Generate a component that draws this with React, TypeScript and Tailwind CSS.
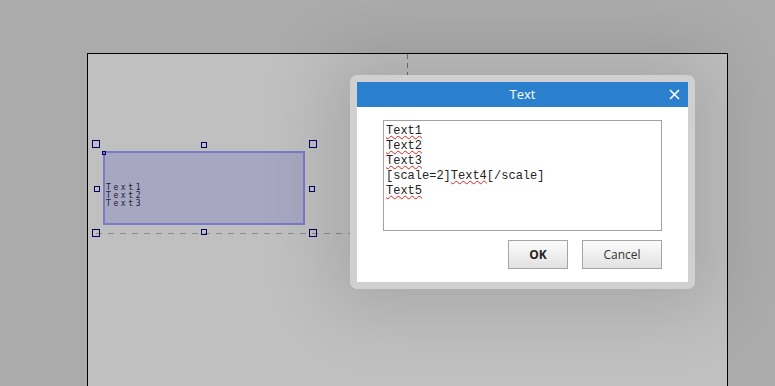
import React from 'react'

const lines = [
  { pre: '', word: 'Text1', post: '' },
  { pre: '', word: 'Text2', post: '' },
  { pre: '', word: 'Text3', post: '' },
  { pre: '[scale=2]', word: 'Text4', post: '[/scale]' },
  { pre: '', word: 'Text5', post: '' },
]

// selection handles on the canvas: [x, y, big]
const handles: [number, number, boolean][] = [
  [4, 86, true],
  [113, 88, false],
  [221, 86, true],
  [6, 132, false],
  [221, 132, false],
  [4, 175, true],
  [113, 175, false],
  [221, 175, true],
]

function Canvas() {
  return (
    <div className="relative w-[641px] h-[340px] border border-black border-b-0 bg-[#c0c0c0]">
      <div className="absolute left-[319px] top-0 w-px h-[24px] bg-[repeating-linear-gradient(180deg,#6f6f6f_0_5px,transparent_5px_9px)]" />
      <div className="absolute left-[15px] top-[97px] w-[202px] h-[74px] border-2 border-[#7a7acb] bg-[#a7a7c1]">
        <div className="pt-[31px] pl-[1px] font-['DejaVu_Sans_Mono',monospace] text-[8px] leading-[8px] tracking-[2.6px] text-[#1a1a2a]">
          <div>Text1</div>
          <div>Text2</div>
          <div>Text3</div>
        </div>
      </div>
      <div className="absolute left-[14px] top-[97px] w-[4px] h-[4px] border border-[#000066]" />
      <div className="absolute left-[8px] top-[179px] w-[260px] h-px bg-[repeating-linear-gradient(90deg,#8a8a8a_0_6px,transparent_6px_12px)]" />
      {handles.map(([x, y, big], i) => (
        <div
          key={i}
          className={`absolute border border-[#000066] ${big ? 'w-[8px] h-[8px]' : 'w-[6px] h-[6px]'}`}
          style={{ left: x, top: y }}
        />
      ))}
    </div>
  )
}

function Dialog() {
  return (
    <div className="absolute left-[350px] top-[75px] w-[345px] h-[214px] rounded-[7px] bg-[#d0d0d0] p-[7px] shadow-[0_0_70px_20px_rgba(0,0,0,0.13)]">
      <div className="h-full flex flex-col bg-white">
        <div className="h-[25px] bg-[#2a80cd] relative flex items-center justify-center text-white text-[13px] font-['Open_Sans',sans-serif]">
          Text
          <svg className="absolute right-[8px] top-[7px]" width="11" height="11" viewBox="0 0 11 11">
            <path d="M1 1 L10 10 M10 1 L1 10" stroke="white" strokeWidth="1.6" />
          </svg>
        </div>
        <div className="flex-1 flex flex-col px-[26px] pt-[13px]">
          <div className="h-[111px] border border-[#a3a3a3] px-[2px] pt-[3px] font-['Liberation_Mono',monospace] text-[12px] leading-[15px] text-[#222]">
            {lines.map((l, i) => (
              <div key={i}>
                {l.pre}
                <span className="underline decoration-wavy decoration-[#e02020] decoration-1 underline-offset-1">{l.word}</span>
                {l.post}
              </div>
            ))}
          </div>
          <div className="flex justify-end gap-[14px] mt-[9px] font-['Open_Sans',sans-serif] text-[12px]">
            <button className="w-[60px] h-[29px] border border-[#a5a5a5] bg-gradient-to-b from-[#fcfcfc] to-[#e2e2e2] font-bold text-[#222]">OK</button>
            <button className="w-[80px] h-[29px] border border-[#a5a5a5] bg-gradient-to-b from-[#fcfcfc] to-[#e2e2e2] text-[#333]">Cancel</button>
          </div>
        </div>
      </div>
    </div>
  )
}

export default function App() {
  return (
    <div className="relative w-[775px] h-[386px] overflow-hidden bg-[#ababab] pt-[53px] pl-[87px]">
      <Canvas />
      <Dialog />
    </div>
  )
}
